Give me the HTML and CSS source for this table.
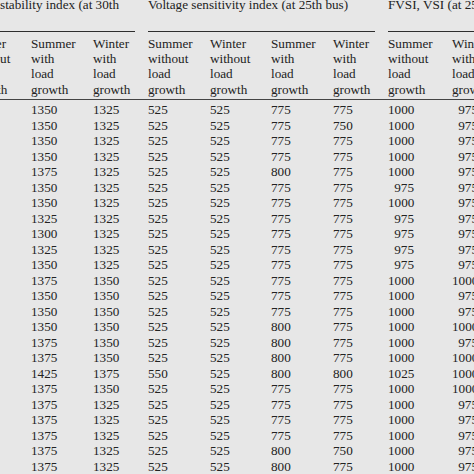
FILE: index.html
```html
<!DOCTYPE html>
<html lang="en">
<head>
<meta charset="utf-8">
<title>Stability indices table</title>
<link rel="stylesheet" href="styles.css">
</head>
<body>
<div class="crop">
<table class="results">
  <colgroup>
    <col class="w61"><col class="w62"><col class="w55">
    <col class="w62"><col class="w61"><col class="w62"><col class="w55">
    <col class="w64"><col class="w64">
  </colgroup>
  <thead>
    <tr class="group-row">
      <th colspan="3" class="group first"><div class="group-label">stability index (at 30th</div></th>
      <th colspan="4" class="group"><div class="group-label">Voltage sensitivity index (at 25th bus)</div></th>
      <th colspan="2" class="group last"><div class="group-label">FVSI, VSI (at 25th bus)</div></th>
    </tr>
    <tr class="head-row">
      <th>Winter<br>without<br>load<br>growth</th>
      <th>Summer<br>with<br>load<br>growth</th>
      <th>Winter<br>with<br>load<br>growth</th>
      <th>Summer<br>without<br>load<br>growth</th>
      <th>Winter<br>without<br>load<br>growth</th>
      <th>Summer<br>with<br>load<br>growth</th>
      <th>Winter<br>with<br>load<br>growth</th>
      <th>Summer<br>without<br>load<br>growth</th>
      <th>Winter<br>with<br>load<br>growth</th>
    </tr>
  </thead>
  <tbody>
    <tr class="first-row"><td></td><td>1350</td><td>1325</td><td>525</td><td>525</td><td>775</td><td>775</td><td class="r">1000</td><td class="r">975</td></tr>
    <tr><td></td><td>1350</td><td>1325</td><td>525</td><td>525</td><td>775</td><td>750</td><td class="r">1000</td><td class="r">975</td></tr>
    <tr><td></td><td>1350</td><td>1325</td><td>525</td><td>525</td><td>775</td><td>775</td><td class="r">1000</td><td class="r">975</td></tr>
    <tr><td></td><td>1350</td><td>1325</td><td>525</td><td>525</td><td>775</td><td>775</td><td class="r">1000</td><td class="r">975</td></tr>
    <tr><td></td><td>1375</td><td>1325</td><td>525</td><td>525</td><td>800</td><td>775</td><td class="r">1000</td><td class="r">975</td></tr>
    <tr><td></td><td>1350</td><td>1325</td><td>525</td><td>525</td><td>775</td><td>775</td><td class="r">975</td><td class="r">975</td></tr>
    <tr><td></td><td>1350</td><td>1325</td><td>525</td><td>525</td><td>775</td><td>775</td><td class="r">1000</td><td class="r">975</td></tr>
    <tr><td></td><td>1325</td><td>1325</td><td>525</td><td>525</td><td>775</td><td>775</td><td class="r">975</td><td class="r">975</td></tr>
    <tr><td></td><td>1300</td><td>1325</td><td>525</td><td>525</td><td>775</td><td>775</td><td class="r">975</td><td class="r">975</td></tr>
    <tr><td></td><td>1325</td><td>1325</td><td>525</td><td>525</td><td>775</td><td>775</td><td class="r">975</td><td class="r">975</td></tr>
    <tr><td></td><td>1350</td><td>1325</td><td>525</td><td>525</td><td>775</td><td>775</td><td class="r">975</td><td class="r">975</td></tr>
    <tr><td></td><td>1375</td><td>1350</td><td>525</td><td>525</td><td>775</td><td>775</td><td class="r">1000</td><td class="r">1000</td></tr>
    <tr><td></td><td>1350</td><td>1350</td><td>525</td><td>525</td><td>775</td><td>775</td><td class="r">1000</td><td class="r">975</td></tr>
    <tr><td></td><td>1350</td><td>1350</td><td>525</td><td>525</td><td>775</td><td>775</td><td class="r">1000</td><td class="r">975</td></tr>
    <tr><td></td><td>1350</td><td>1350</td><td>525</td><td>525</td><td>800</td><td>775</td><td class="r">1000</td><td class="r">1000</td></tr>
    <tr><td></td><td>1375</td><td>1350</td><td>525</td><td>525</td><td>800</td><td>775</td><td class="r">1000</td><td class="r">975</td></tr>
    <tr><td></td><td>1375</td><td>1350</td><td>525</td><td>525</td><td>800</td><td>775</td><td class="r">1000</td><td class="r">1000</td></tr>
    <tr><td></td><td>1425</td><td>1375</td><td>550</td><td>525</td><td>800</td><td>800</td><td class="r">1025</td><td class="r">1000</td></tr>
    <tr><td></td><td>1375</td><td>1350</td><td>525</td><td>525</td><td>775</td><td>775</td><td class="r">1000</td><td class="r">1000</td></tr>
    <tr><td></td><td>1375</td><td>1325</td><td>525</td><td>525</td><td>775</td><td>775</td><td class="r">1000</td><td class="r">975</td></tr>
    <tr><td></td><td>1375</td><td>1325</td><td>525</td><td>525</td><td>775</td><td>775</td><td class="r">1000</td><td class="r">975</td></tr>
    <tr><td></td><td>1375</td><td>1325</td><td>525</td><td>525</td><td>775</td><td>775</td><td class="r">1000</td><td class="r">975</td></tr>
    <tr><td></td><td>1375</td><td>1325</td><td>525</td><td>525</td><td>800</td><td>750</td><td class="r">1000</td><td class="r">975</td></tr>
    <tr><td></td><td>1375</td><td>1325</td><td>525</td><td>525</td><td>800</td><td>775</td><td class="r">1000</td><td class="r">975</td></tr>
  </tbody>
</table>
</div>
</body>
</html>
```
FILE: styles.css
```css
html, body {
  margin: 0;
  padding: 0;
  width: 474px;
  height: 474px;
  overflow: hidden;
  background: #e7e7e7;
}

.crop {
  margin-left: -30px;
  margin-top: -3px;
}

.results {
  table-layout: fixed;
  width: 546px;
  border-collapse: collapse;
  border-spacing: 0;
  font-family: "Liberation Serif", "Times New Roman", serif;
  font-size: 13.2px;
  line-height: 15.5px;
  color: #222;
}

.w55 { width: 55px; }
.w61 { width: 61px; }
.w62 { width: 62px; }
.w64 { width: 64px; }

.results th,
.results td {
  padding: 0;
  text-align: left;
  font-weight: normal;
  vertical-align: top;
  white-space: nowrap;
}

.group-label {
  padding-bottom: 18px;
  margin-right: 13px;
  border-bottom: 1px solid #2e2e2e;
}

.group.first .group-label {
  padding-left: 30px;
}

.group.last .group-label {
  margin-right: 0;
}

.head-row th {
  padding-top: 4px;
  padding-bottom: 2px;
  line-height: 15.4px;
  border-bottom: 1px solid #444;
}

.first-row td {
  padding-top: 2px;
}

.results td.r {
  text-align: right;
  padding-right: 38px;
}
```
